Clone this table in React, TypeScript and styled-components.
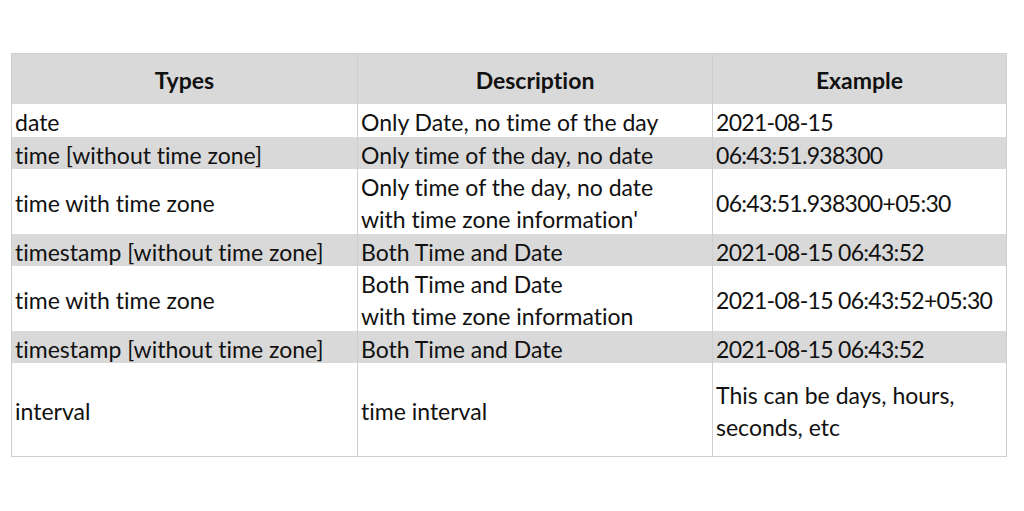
import React from "react";
import styled, { createGlobalStyle } from "styled-components";

const Global = createGlobalStyle`
  html, body { margin: 0; padding: 0; background: #ffffff; }
  body { font-family: Lato, "Open Sans", sans-serif; color: #111111; font-variant-ligatures: none; }
`;

const Page = styled.div`
  width: 1024px;
  height: 511px;
  padding: 53px 0 0 11px;
  box-sizing: border-box;
`;

const Table = styled.table`
  border-collapse: collapse;
  table-layout: fixed;
  width: 995px;
  border: 1px solid #cfcfcf;
  font-size: 23px;
`;

const Row = styled.tr<{ $shade?: boolean; $h: number }>`
  height: ${(p) => p.$h}px;
  background: ${(p) => (p.$shade ? "#d9d9d9" : "#ffffff")};
`;

const Head = styled.th`
  font-weight: 700;
  font-size: 23px;
  text-align: center;
  vertical-align: middle;
  border-left: 1px solid #cfcfcf;
  padding: 3px 0 0 0;
  &:first-child { border-left: none; }
`;

const Cell = styled.td<{ $numeric?: boolean }>`
  text-align: left;
  vertical-align: middle;
  padding: 0 0 0 3px;
  border-left: 1px solid #cfcfcf;
  white-space: nowrap;
  letter-spacing: ${(p) => (p.$numeric ? "-0.7px" : "0")};
  &:first-child { border-left: none; }
`;

const Line = styled.span`
  display: block;
  height: 32px;
  line-height: 36px;
`;

type R = { a: string; b: string[]; c: string[]; shade: boolean; h: number; num: boolean };

const rows: R[] = [
  { a: "date", b: ["Only Date, no time of the day"], c: ["2021-08-15"], shade: false, h: 33, num: true },
  { a: "time [without time zone]", b: ["Only time of the day, no date"], c: ["06:43:51.938300"], shade: true, h: 32, num: true },
  { a: "time with time zone", b: ["Only time of the day, no date", "with time zone information'"], c: ["06:43:51.938300+05:30"], shade: false, h: 65, num: true },
  { a: "timestamp [without time zone]", b: ["Both Time and Date"], c: ["2021-08-15 06:43:52"], shade: true, h: 32, num: true },
  { a: "time with time zone", b: ["Both Time and Date", "with time zone information"], c: ["2021-08-15 06:43:52+05:30"], shade: false, h: 65, num: true },
  { a: "timestamp [without time zone]", b: ["Both Time and Date"], c: ["2021-08-15 06:43:52"], shade: true, h: 32, num: true },
  { a: "interval", b: ["time interval"], c: ["This can be days, hours,", "seconds, etc"], shade: false, h: 94, num: false },
];

const Lines = ({ items }: { items: string[] }) => (
  <>
    {items.map((t, i) => (
      <Line key={i}>{t}</Line>
    ))}
  </>
);

export default function App() {
  return (
    <Page>
      <Global />
      <Table>
        <colgroup>
          <col style={{ width: 346 }} />
          <col style={{ width: 355 }} />
          <col style={{ width: 294 }} />
        </colgroup>
        <thead>
          <Row $shade $h={50}>
            <Head>Types</Head>
            <Head>Description</Head>
            <Head>Example</Head>
          </Row>
        </thead>
        <tbody>
          {rows.map((r, i) => (
            <Row key={i} $shade={r.shade} $h={r.h}>
              <Cell>
                <Lines items={[r.a]} />
              </Cell>
              <Cell>
                <Lines items={r.b} />
              </Cell>
              <Cell $numeric={r.num}>
                <Lines items={r.c} />
              </Cell>
            </Row>
          ))}
        </tbody>
      </Table>
    </Page>
  );
}
